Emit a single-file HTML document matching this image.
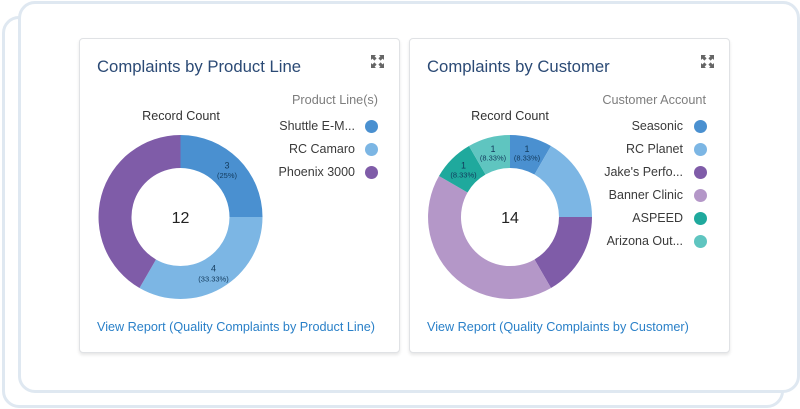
<!DOCTYPE html>
<html>
<head>
<meta charset="utf-8">
<style>
html,body{margin:0;padding:0;background:#fff}
body{width:800px;height:409px;position:relative;overflow:hidden;font-family:"Liberation Sans",sans-serif}
#w{position:absolute;left:0;top:0;width:800px;height:409px;filter:blur(.35px)}
.frame{position:absolute;box-sizing:border-box;background:#fff;border:3px solid #dfe8f1;border-radius:17px}
.card{position:absolute;top:38px;width:321px;height:315px;box-sizing:border-box;background:#fff;border:1px solid #e0e2e5;border-radius:4px;box-shadow:0 2px 3px rgba(0,0,0,.1)}
.t{position:absolute;white-space:nowrap;line-height:1}
.title{font-size:16.7px;color:#2b4a75;top:58.500px}
.link{font-size:12.65px;color:#2a80c8;top:320.500px}
.hdr{font-size:12.7px;color:#7d7d7d;text-align:right;top:93.500px}
.rc{font-size:12.6px;color:#333;top:110px;text-align:center;width:100px}
.num{font-size:16px;color:#222;top:210.500px;text-align:center;width:60px}
.lg{font-size:12.5px;color:#3a3a3a;text-align:right;width:110px}
.dot{position:absolute;width:13px;height:13px;border-radius:50%}
svg{position:absolute}
</style>
</head>
<body>
<div id="w">
<div class="frame" style="left:2px;top:16px;width:782px;height:392px"></div>
<div class="frame" style="left:17.500px;top:1px;width:782px;height:392px"></div>

<div class="card" style="left:79px"></div>
<div class="card" style="left:409px"></div>

<div class="t title" style="left:97px">Complaints by Product Line</div>
<div class="t title" style="left:427px">Complaints by Customer</div>

<svg style="left:371px;top:55px" width="13" height="13" viewBox="0 0 13 13" fill="#666"><path d="M0 0H5L3.600 1.400 5.600 3.400 3.400 5.600 1.400 3.600 0 5ZM13 0V5L11.600 3.600 9.600 5.600 7.400 3.400 9.400 1.400 8 0ZM0 13V8L1.400 9.400 3.400 7.400 5.600 9.600 3.600 11.600 5 13ZM13 13H8L9.400 11.600 7.400 9.600 9.600 7.400 11.600 9.400 13 8Z"/></svg>
<svg style="left:700.500px;top:55px" width="13" height="13" viewBox="0 0 13 13" fill="#666"><path d="M0 0H5L3.600 1.400 5.600 3.400 3.400 5.600 1.400 3.600 0 5ZM13 0V5L11.600 3.600 9.600 5.600 7.400 3.400 9.400 1.400 8 0ZM0 13V8L1.400 9.400 3.400 7.400 5.600 9.600 3.600 11.600 5 13ZM13 13H8L9.400 11.600 7.400 9.600 9.600 7.400 11.600 9.400 13 8Z"/></svg>

<div class="t rc" style="left:131px">Record Count</div>
<div class="t rc" style="left:460px">Record Count</div>

<svg style="left:0;top:0" width="800" height="409">
<g transform="translate(180.500 217)">
<path fill="#4a90d0" d="M0 -82A82 82 0 0 1 82 0H49A49 49 0 0 0 0 -49Z"/>
<path fill="#7cb6e4" d="M82 0A82 82 0 0 1 -41 71L-24.500 42.440A49 49 0 0 0 49 0Z"/>
<path fill="#7f5ca8" d="M-41 71A82 82 0 0 1 0 -82V-49A49 49 0 0 0 -24.500 42.440Z"/>
</g>
<g transform="translate(510 217)">
<path fill="#4a90d0" d="M0 -82A82 82 0 0 1 41 -71L24.500 -42.440A49 49 0 0 0 0 -49Z"/>
<path fill="#7cb6e4" d="M41 -71A82 82 0 0 1 82 0H49A49 49 0 0 0 24.500 -42.440Z"/>
<path fill="#7f5ca8" d="M82 0A82 82 0 0 1 41 71L24.500 42.440A49 49 0 0 0 49 0Z"/>
<path fill="#b497c8" d="M41 71A82 82 0 0 1 -71 -41L-42.440 -24.500A49 49 0 0 0 24.500 42.440Z"/>
<path fill="#1fa99d" d="M-71 -41A82 82 0 0 1 -41 -71L-24.500 -42.440A49 49 0 0 0 -42.440 -24.500Z"/>
<path fill="#5fc5c0" d="M-41 -71A82 82 0 0 1 0 -82V-49A49 49 0 0 0 -24.500 -42.440Z"/>
</g>
<g font-family="Liberation Sans" text-anchor="middle" fill="#123a5c">
<text x="227" y="168.500" font-size="9">3</text>
<text x="227" y="178" font-size="7.500">(25%)</text>
<text x="213.500" y="271.500" font-size="9">4</text>
<text x="213.500" y="281.500" font-size="7.500">(33.33%)</text>
<text x="527" y="152" font-size="9">1</text>
<text x="527" y="160.500" font-size="7.500">(8.33%)</text>
<text x="493" y="152" font-size="9">1</text>
<text x="493" y="160.500" font-size="7.500">(8.33%)</text>
<text x="463.500" y="168.500" font-size="9">1</text>
<text x="463.500" y="177.500" font-size="7.500">(8.33%)</text>
</g>
</svg>

<div class="t num" style="left:150.500px">12</div>
<div class="t num" style="left:480px">14</div>

<div class="t hdr" style="left:278px;width:100px">Product Line(s)</div>
<div class="t hdr" style="left:596px;width:110px">Customer Account</div>

<div class="t lg" style="left:245px;top:120px">Shuttle E-M...</div>
<div class="t lg" style="left:245px;top:143px">RC Camaro</div>
<div class="t lg" style="left:245px;top:166px">Phoenix 3000</div>
<div class="dot" style="left:365px;top:120px;background:#4a90d0"></div>
<div class="dot" style="left:365px;top:143px;background:#7cb6e4"></div>
<div class="dot" style="left:365px;top:166px;background:#7f5ca8"></div>

<div class="t lg" style="left:573px;top:120px">Seasonic</div>
<div class="t lg" style="left:573px;top:143px">RC Planet</div>
<div class="t lg" style="left:573px;top:166px">Jake's Perfo...</div>
<div class="t lg" style="left:573px;top:189px">Banner Clinic</div>
<div class="t lg" style="left:573px;top:212px">ASPEED</div>
<div class="t lg" style="left:573px;top:235px">Arizona Out...</div>
<div class="dot" style="left:694px;top:120px;background:#4a90d0"></div>
<div class="dot" style="left:694px;top:143px;background:#7cb6e4"></div>
<div class="dot" style="left:694px;top:166px;background:#7f5ca8"></div>
<div class="dot" style="left:694px;top:189px;background:#b497c8"></div>
<div class="dot" style="left:694px;top:212px;background:#1fa99d"></div>
<div class="dot" style="left:694px;top:235px;background:#5fc5c0"></div>

<div class="t link" style="left:97px">View Report (Quality Complaints by Product Line)</div>
<div class="t link" style="left:427px">View Report (Quality Complaints by Customer)</div>
</div>
</body>
</html>
